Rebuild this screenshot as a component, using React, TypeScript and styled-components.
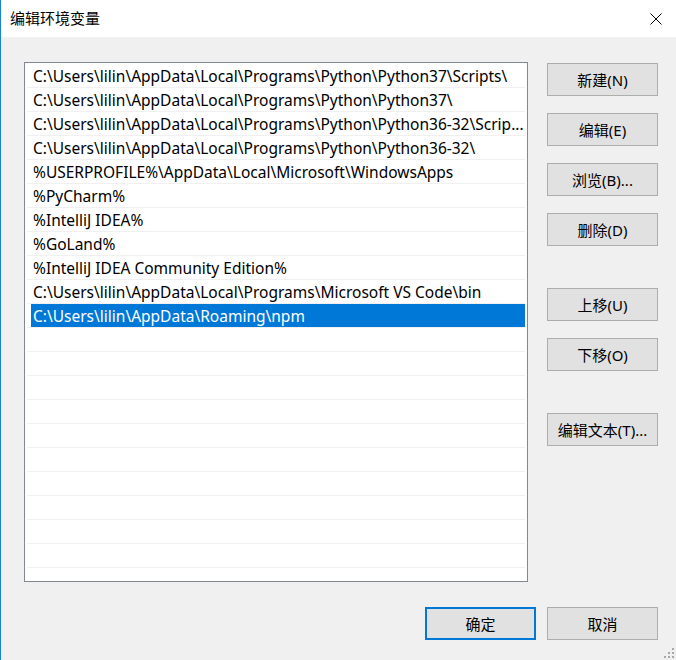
import styled, { createGlobalStyle } from "styled-components";

const GlobalStyle = createGlobalStyle`
    html, body {
        margin: 0;
        padding: 0;
        background: #f0f0f0;
    }
    * {
        box-sizing: border-box;
    }
`

const FONT = `"Noto Sans", "Noto Sans CJK SC", sans-serif`

const paths: string[] = [
    String.raw`C:\Users\lilin\AppData\Local\Programs\Python\Python37\Scripts\ `.trim(),
    String.raw`C:\Users\lilin\AppData\Local\Programs\Python\Python37\ `.trim(),
    String.raw`C:\Users\lilin\AppData\Local\Programs\Python\Python36-32\Scrip...`,
    String.raw`C:\Users\lilin\AppData\Local\Programs\Python\Python36-32\ `.trim(),
    String.raw`%USERPROFILE%\AppData\Local\Microsoft\WindowsApps`,
    "%PyCharm%",
    "%IntelliJ IDEA%",
    "%GoLand%",
    "%IntelliJ IDEA Community Edition%",
    String.raw`C:\Users\lilin\AppData\Local\Programs\Microsoft VS Code\bin`,
    String.raw`C:\Users\lilin\AppData\Roaming\npm`,
]

const selectedIndex = 10
const totalRows = 22

const App = () => {
    const rows = [...paths, ...Array(totalRows - paths.length).fill("")]

    return (
        <>
            <GlobalStyle />
            <Window>
                <TitleBar>
                    <Title>编辑环境变量</Title>
                    <CloseIcon width="12" height="12" viewBox="0 0 12 12">
                        <path d="M0.5 0.5 L11.5 11.5 M11.5 0.5 L0.5 11.5" stroke="#000" strokeWidth="1" fill="none" />
                    </CloseIcon>
                </TitleBar>
                <Body>
                    <Main>
                        <PathList>
                            {rows.map((text, i) => (
                                <Row key={i}>
                                    <Cell $selected={i === selectedIndex}>{text}</Cell>
                                </Row>
                            ))}
                        </PathList>
                        <SideButtons>
                            <ButtonGroup>
                                <Button>新建(N)</Button>
                                <Button>编辑(E)</Button>
                                <Button>浏览(B)...</Button>
                                <Button>删除(D)</Button>
                            </ButtonGroup>
                            <ButtonGroup>
                                <Button>上移(U)</Button>
                                <Button>下移(O)</Button>
                            </ButtonGroup>
                            <ButtonGroup>
                                <Button>编辑文本(T)...</Button>
                            </ButtonGroup>
                        </SideButtons>
                    </Main>
                    <Footer>
                        <Button $default>确定</Button>
                        <Button>取消</Button>
                    </Footer>
                    <SizeGrip width="14" height="12" viewBox="0 0 14 12">
                        <rect x="10" y="0" width="2" height="2" fill="#a8a8a8" />
                        <rect x="6" y="4" width="2" height="2" fill="#a8a8a8" />
                        <rect x="10" y="4" width="2" height="2" fill="#a8a8a8" />
                        <rect x="2" y="8" width="2" height="2" fill="#a8a8a8" />
                        <rect x="6" y="8" width="2" height="2" fill="#a8a8a8" />
                        <rect x="10" y="8" width="2" height="2" fill="#a8a8a8" />
                    </SizeGrip>
                </Body>
            </Window>
        </>
    )
}
export default App

const Window = styled.div`
    position: relative;
    width: 676px;
    height: 660px;
    display: flex;
    flex-direction: column;
    border-left: 1px solid #1883d7;
    font-family: ${FONT};
    font-size: 15px;
    color: #000;
    overflow: hidden;
`

const TitleBar = styled.div`
    height: 37px;
    flex: none;
    background: #fff;
    display: flex;
    align-items: center;
    justify-content: space-between;
    padding: 0 14px 0 9px;
`

const Title = styled.span`
    font-size: 15px;
    line-height: 1;
`

const CloseIcon = styled.svg`
    display: block;
`

const Body = styled.div`
    position: relative;
    flex: 1;
    background: #f0f0f0;
    padding: 25px 18px 0 23px;
    display: flex;
    flex-direction: column;
`

const Main = styled.div`
    display: flex;
    gap: 19px;
`

const PathList = styled.div`
    width: 504px;
    height: 520px;
    border: 1px solid #828790;
    background: #fff;
    padding: 1px;
    overflow: hidden;
    font-size: 15.5px;
`

const Row = styled.div`
    height: 24px;
    margin: 0 1px;
    border-bottom: 1px solid #f0f0f0;
    display: flex;
`

const Cell = styled.div<{ $selected?: boolean }>`
    flex: 1;
    margin-left: 4px;
    padding-left: 2px;
    line-height: 24px;
    white-space: nowrap;
    overflow: hidden;
    background: ${p => p.$selected ? "#0078d7" : "transparent"};
    color: ${p => p.$selected ? "#fff" : "#000"};
`

const SideButtons = styled.div`
    display: flex;
    flex-direction: column;
    gap: 42px;
    padding-top: 1px;
`

const ButtonGroup = styled.div`
    display: flex;
    flex-direction: column;
    gap: 17px;
`

const Button = styled.button<{ $default?: boolean }>`
    width: 111px;
    height: 33px;
    padding: 0;
    background: #e1e1e1;
    border: ${p => p.$default ? "2px solid #0078d7" : "1px solid #adadad"};
    font-family: ${FONT};
    font-size: 15px;
    color: #000;
    display: flex;
    align-items: center;
    justify-content: center;
`

const Footer = styled.div`
    display: flex;
    justify-content: flex-end;
    gap: 11px;
    margin-top: 25px;
`

const SizeGrip = styled.svg`
    position: absolute;
    right: 0;
    bottom: 0;
`
